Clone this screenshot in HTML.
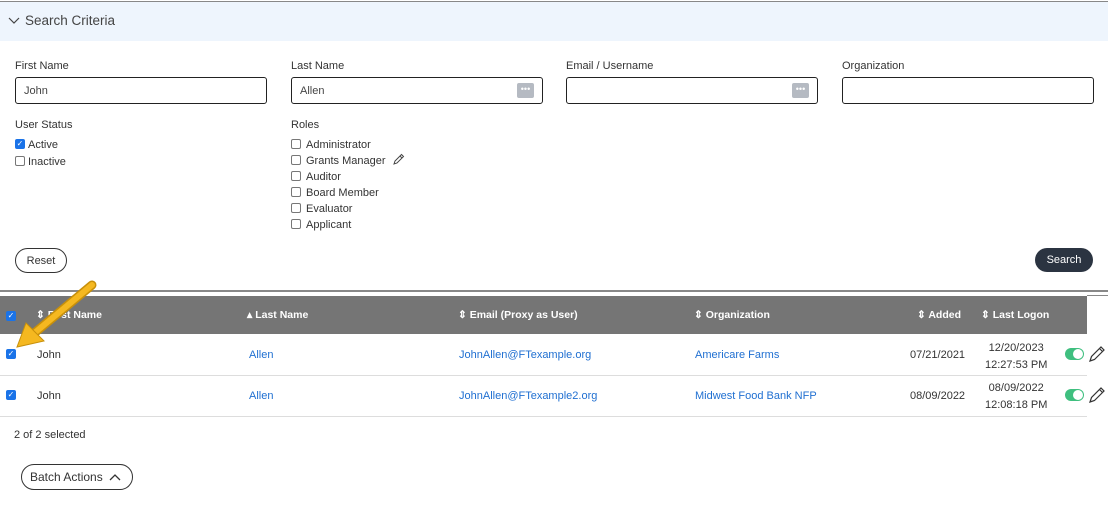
<!DOCTYPE html>
<html><head><style>
*{box-sizing:border-box;margin:0;padding:0}
body{width:1108px;height:509px;background:#fff;font-family:"Liberation Sans",sans-serif;font-size:11px;color:#333;position:relative;overflow:hidden}
.a{position:absolute;white-space:nowrap}
.inp{position:absolute;height:27px;width:252px;border:1px solid #222;border-radius:3px;padding:0 8px;line-height:26px;font-size:11px;color:#444}
.dots{position:absolute;right:8px;top:5px;width:17px;height:15px;background:#b5bac2;border-radius:2px;color:#fff;font-size:9px;line-height:12px;text-align:center}
.cb{position:absolute;width:10px;height:10px;border:1px solid #777;border-radius:2px;background:#fff}
.cbc{position:absolute;width:10px;height:10px;background:#1a73e8;border-radius:2px;color:#fff;font-size:8px;line-height:10px;text-align:center}
.th{position:absolute;top:309px;color:#fff;font-size:10.5px;font-weight:bold}
.lnk{color:#1f6fd1}
.tog{position:absolute;width:19px;height:12px;border-radius:6px;background:#3fbf7f}
.tog::after{content:"";position:absolute;right:1px;top:1px;width:10px;height:10px;border-radius:50%;background:#fff}
</style></head><body>
<div class="a" style="left:0;top:1px;width:1108px;height:1px;background:#888"></div>
<div class="a" style="left:0;top:2px;width:1108px;height:39px;background:#eef5fd"></div>
<svg class="a" style="left:8px;top:17px" width="12" height="8"><path d="M1 1 L6 6 L11 1" stroke="#444" fill="none" stroke-width="1.2"/></svg>
<div class="a" style="left:25px;top:13px;font-size:13.5px;color:#444">Search Criteria</div>

<div class="a" style="left:15px;top:60px">First Name</div>
<div class="a" style="left:291px;top:60px">Last Name</div>
<div class="a" style="left:566px;top:60px">Email / Username</div>
<div class="a" style="left:842px;top:60px">Organization</div>
<div class="inp" style="left:15px;top:77px">John</div>
<div class="inp" style="left:291px;top:77px">Allen<div class="dots">•••</div></div>
<div class="inp" style="left:566px;top:77px"><div class="dots">•••</div></div>
<div class="inp" style="left:842px;top:77px"></div>

<div class="a" style="left:15px;top:119px">User Status</div>
<div class="cbc" style="left:15px;top:139px">✓</div><div class="a" style="left:28px;top:139px">Active</div>
<div class="cb" style="left:15px;top:156px"></div><div class="a" style="left:28px;top:156px">Inactive</div>
<div class="a" style="left:291px;top:119px">Roles</div>
<div class="cb" style="left:291px;top:139px"></div><div class="a" style="left:306px;top:139px">Administrator</div>
<div class="cb" style="left:291px;top:155px"></div><div class="a" style="left:306px;top:155px">Grants Manager</div>
<svg class="a" style="left:392px;top:153px" width="13" height="13"><path d="M2 11 L3 8 L9.5 1.5 L11.5 3.5 L5 10 Z M8 3 L10 5" stroke="#444" fill="none"/></svg>
<div class="cb" style="left:291px;top:171px"></div><div class="a" style="left:306px;top:171px">Auditor</div>
<div class="cb" style="left:291px;top:187px"></div><div class="a" style="left:306px;top:187px">Board Member</div>
<div class="cb" style="left:291px;top:203px"></div><div class="a" style="left:306px;top:203px">Evaluator</div>
<div class="cb" style="left:291px;top:219px"></div><div class="a" style="left:306px;top:219px">Applicant</div>

<div class="a" style="left:15px;top:248px;width:52px;height:25px;border:1px solid #333;border-radius:13px;text-align:center;line-height:24px">Reset</div>
<div class="a" style="left:1035px;top:248px;width:58px;height:24px;background:#2b3441;color:#fff;border-radius:12px;text-align:center;line-height:25px">Search</div>

<div class="a" style="left:0;top:290px;width:1108px;height:2px;background:#888"></div>
<div class="a" style="left:0;top:296px;width:1087px;height:38px;background:#757575"></div>
<div class="a" style="left:1087px;top:295px;width:21px;height:1px;background:#888"></div>
<div class="cbc" style="left:6px;top:311px">✓</div>
<div class="th" style="left:36px">⇕ First Name</div>
<div class="th" style="left:247px">▴ Last Name</div>
<div class="th" style="left:458px">⇕ Email (Proxy as User)</div>
<div class="th" style="left:694px">⇕ Organization</div>
<div class="th" style="left:917px">⇕ Added</div>
<div class="th" style="left:981px">⇕ Last Logon</div>

<div class="a" style="left:0;top:375px;width:1087px;height:1px;background:#ddd"></div>
<div class="a" style="left:0;top:416px;width:1087px;height:1px;background:#ddd"></div>
<div class="cbc" style="left:6px;top:349px">✓</div>
<div class="a" style="left:37px;top:349px">John</div>
<div class="a lnk" style="left:249px;top:349px">Allen</div>
<div class="a lnk" style="left:459px;top:349px">JohnAllen@FTexample.org</div>
<div class="a lnk" style="left:695px;top:349px">Americare Farms</div>
<div class="a" style="left:910px;top:349px">07/21/2021</div>
<div class="a" style="left:985px;top:340px;text-align:center;line-height:17px">12/20/2023<br>12:27:53 PM</div>
<div class="tog" style="left:1065px;top:348px"></div>
<svg class="a" style="left:1088px;top:345px" width="18" height="18"><path d="M2 16 L3.5 11.5 L13 2 L16 5 L6.5 14.5 Z M11.5 3.5 L14.5 6.5" stroke="#333" fill="none" stroke-width="1.2"/></svg>

<div class="cbc" style="left:6px;top:390px">✓</div>
<div class="a" style="left:37px;top:390px">John</div>
<div class="a lnk" style="left:249px;top:390px">Allen</div>
<div class="a lnk" style="left:459px;top:390px">JohnAllen@FTexample2.org</div>
<div class="a lnk" style="left:695px;top:390px">Midwest Food Bank NFP</div>
<div class="a" style="left:910px;top:390px">08/09/2022</div>
<div class="a" style="left:985px;top:380px;text-align:center;line-height:17px">08/09/2022<br>12:08:18 PM</div>
<div class="tog" style="left:1065px;top:389px"></div>
<svg class="a" style="left:1088px;top:386px" width="18" height="18"><path d="M2 16 L3.5 11.5 L13 2 L16 5 L6.5 14.5 Z M11.5 3.5 L14.5 6.5" stroke="#333" fill="none" stroke-width="1.2"/></svg>

<div class="a" style="left:14px;top:429px">2 of 2 selected</div>
<div class="a" style="left:21px;top:464px;width:112px;height:26px;border:1px solid #333;border-radius:13px;line-height:24px;padding-left:8px;font-size:12px">Batch Actions <svg width="12" height="8" style="margin-left:3px"><path d="M1 7 L6 2 L11 7" stroke="#333" fill="none" stroke-width="1.3"/></svg></div>

<svg class="a" style="left:0;top:275px" width="110" height="85">
<path d="M92 10 L32 60" stroke="#c8900a" stroke-width="9" stroke-linecap="round"/>
<path d="M92 10 L32 60" stroke="#f5b820" stroke-width="6" stroke-linecap="round"/>
<path d="M17 72 L26 48 L44 66 Z" fill="#f5b820" stroke="#c8900a" stroke-width="1"/>
</svg>
</body></html>
